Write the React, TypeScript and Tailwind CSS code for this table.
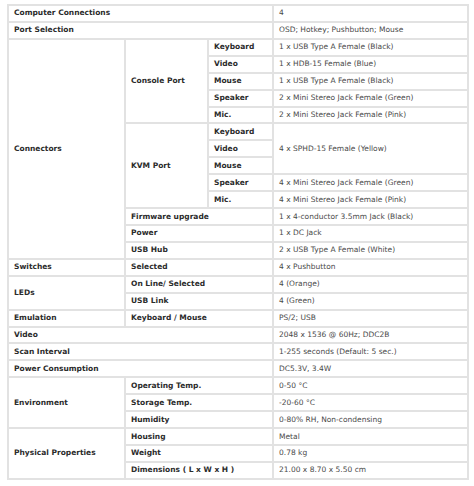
import React from "react";

const th = "border-2 border-[#e2e2e2] px-[5px] py-0 text-left align-middle font-bold text-[#2b2b2b] whitespace-nowrap";
const td = "border-2 border-[#e2e2e2] px-[5px] py-0 text-left align-middle text-[#4a4a4a] whitespace-nowrap";

function Row({ children }: { children: React.ReactNode }) {
  return <tr className="h-[16.93px]">{children}</tr>;
}

export default function App() {
  return (
    <div className="min-h-[486px] bg-white pl-[7px] pt-[4px]">
      <table
        className="w-[460px] table-fixed border-collapse text-[7.5px] leading-[10px]"
        style={{ fontFamily: '"DejaVu Sans", Verdana, sans-serif' }}
      >
        <colgroup>
          <col className="w-[117px]" />
          <col className="w-[83px]" />
          <col className="w-[65px]" />
          <col className="w-[195px]" />
        </colgroup>
        <tbody>
          <Row>
            <td className={th} colSpan={3}>Computer Connections</td>
            <td className={td}>4</td>
          </Row>
          <Row>
            <td className={th} colSpan={3}>Port Selection</td>
            <td className={td}>OSD; Hotkey; Pushbutton; Mouse</td>
          </Row>
          <Row>
            <td className={th} rowSpan={13}>Connectors</td>
            <td className={th} rowSpan={5}>Console Port</td>
            <td className={th}>Keyboard</td>
            <td className={td}>1 x USB Type A Female (Black)</td>
          </Row>
          <Row>
            <td className={th}>Video</td>
            <td className={td}>1 x HDB-15 Female (Blue)</td>
          </Row>
          <Row>
            <td className={th}>Mouse</td>
            <td className={td}>1 x USB Type A Female (Black)</td>
          </Row>
          <Row>
            <td className={th}>Speaker</td>
            <td className={td}>2 x Mini Stereo Jack Female (Green)</td>
          </Row>
          <Row>
            <td className={th}>Mic.</td>
            <td className={td}>2 x Mini Stereo Jack Female (Pink)</td>
          </Row>
          <Row>
            <td className={th} rowSpan={5}>KVM Port</td>
            <td className={th}>Keyboard</td>
            <td className={td} rowSpan={3}>4 x SPHD-15 Female (Yellow)</td>
          </Row>
          <Row>
            <td className={th}>Video</td>
          </Row>
          <Row>
            <td className={th}>Mouse</td>
          </Row>
          <Row>
            <td className={th}>Speaker</td>
            <td className={td}>4 x Mini Stereo Jack Female (Green)</td>
          </Row>
          <Row>
            <td className={th}>Mic.</td>
            <td className={td}>4 x Mini Stereo Jack Female (Pink)</td>
          </Row>
          <Row>
            <td className={th} colSpan={2}>Firmware upgrade</td>
            <td className={td}>1 x 4-conductor 3.5mm Jack (Black)</td>
          </Row>
          <Row>
            <td className={th} colSpan={2}>Power</td>
            <td className={td}>1 x DC Jack</td>
          </Row>
          <Row>
            <td className={th} colSpan={2}>USB Hub</td>
            <td className={td}>2 x USB Type A Female (White)</td>
          </Row>
          <Row>
            <td className={th}>Switches</td>
            <td className={th} colSpan={2}>Selected</td>
            <td className={td}>4 x Pushbutton</td>
          </Row>
          <Row>
            <td className={th} rowSpan={2}>LEDs</td>
            <td className={th} colSpan={2}>On Line/ Selected</td>
            <td className={td}>4 (Orange)</td>
          </Row>
          <Row>
            <td className={th} colSpan={2}>USB Link</td>
            <td className={td}>4 (Green)</td>
          </Row>
          <Row>
            <td className={th}>Emulation</td>
            <td className={th} colSpan={2}>Keyboard / Mouse</td>
            <td className={td}>PS/2; USB</td>
          </Row>
          <Row>
            <td className={th} colSpan={3}>Video</td>
            <td className={td}>2048 x 1536 @ 60Hz; DDC2B</td>
          </Row>
          <Row>
            <td className={th} colSpan={3}>Scan Interval</td>
            <td className={td}>1-255 seconds (Default: 5 sec.)</td>
          </Row>
          <Row>
            <td className={th} colSpan={3}>Power Consumption</td>
            <td className={td}>DC5.3V, 3.4W</td>
          </Row>
          <Row>
            <td className={th} rowSpan={3}>Environment</td>
            <td className={th} colSpan={2}>Operating Temp.</td>
            <td className={td}>0-50 °C</td>
          </Row>
          <Row>
            <td className={th} colSpan={2}>Storage Temp.</td>
            <td className={td}>-20-60 °C</td>
          </Row>
          <Row>
            <td className={th} colSpan={2}>Humidity</td>
            <td className={td}>0-80% RH, Non-condensing</td>
          </Row>
          <Row>
            <td className={th} rowSpan={3}>Physical Properties</td>
            <td className={th} colSpan={2}>Housing</td>
            <td className={td}>Metal</td>
          </Row>
          <Row>
            <td className={th} colSpan={2}>Weight</td>
            <td className={td}>0.78 kg</td>
          </Row>
          <Row>
            <td className={th} colSpan={2}>Dimensions ( L x W x H )</td>
            <td className={td}>21.00 x 8.70 x 5.50 cm</td>
          </Row>
        </tbody>
      </table>
    </div>
  );
}
